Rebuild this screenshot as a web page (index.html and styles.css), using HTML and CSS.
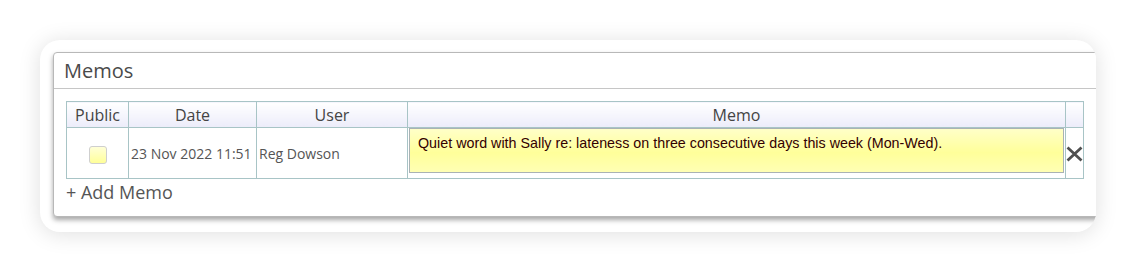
FILE: index.html
```html
<!DOCTYPE html>
<html>
<head>
<meta charset="utf-8">
<link rel="stylesheet" href="styles.css">
</head>
<body>
<div class="card">
  <div class="panel">
    <div class="panel-head">Memos</div>
    <div class="panel-body">
      <table class="memos">
        <colgroup>
          <col class="c-public"><col class="c-date"><col class="c-user"><col class="c-memo"><col class="c-del">
        </colgroup>
        <thead>
          <tr><th>Public</th><th>Date</th><th>User</th><th>Memo</th><th></th></tr>
        </thead>
        <tbody>
          <tr>
            <td class="center"><span class="check"></span></td>
            <td>23 Nov 2022 11:51</td>
            <td>Reg Dowson</td>
            <td class="memo-cell"><div class="memo-box">Quiet word with Sally re: lateness on three consecutive days this week (Mon-Wed).</div></td>
            <td class="del"><svg width="17" height="16" viewBox="0 0 17 16"><path d="M1.5 1.5 L15.5 14.5 M15.5 1.5 L1.5 14.5" stroke="#505050" stroke-width="2.8" fill="none"/></svg></td>
          </tr>
        </tbody>
      </table>
      <div class="add">+ Add Memo</div>
    </div>
  </div>
</div>
</body>
</html>
```
FILE: styles.css
```css
html, body { margin: 0; padding: 0; background: #fff; }
body { width: 1137px; height: 273px; overflow: hidden; font-family: "Open Sans", sans-serif; }
.card {
  margin: 40px 0 0 40px;
  width: 1056px;
  height: 192px;
  box-sizing: border-box;
  padding: 12px 0 0 13px;
  border-radius: 20px;
  background: #fff;
  box-shadow: 0 2px 22px rgba(0,0,0,0.13);
  overflow: hidden;
}
.panel {
  width: 1100px;
  height: 165px;
  box-sizing: border-box;
  border: 1px solid #b8b8b8;
  border-radius: 4px;
  background: #fff;
  box-shadow: 0 3px 5px rgba(0,0,0,0.35);
}
.panel-head {
  height: 36px;
  box-sizing: border-box;
  border-bottom: 1px solid #c6c6c6;
  padding: 4px 0 0 10px;
  font-size: 20px;
  color: #4a4a4a;
  line-height: 28px;
}
.panel-body { padding: 12px 0 0 12px; }
.memos {
  border-collapse: collapse;
  table-layout: fixed;
  width: 1017px;
}
.c-public { width: 62px; }
.c-date { width: 128px; }
.c-user { width: 151px; }
.c-memo { width: 658px; }
.c-del { width: 18px; }
.memos th, .memos td { border: 1px solid #a8c4c6; padding: 0; }
.memos th {
  height: 25px;
  font-weight: normal;
  font-size: 16px;
  color: #444;
  line-height: 22px;
  background: linear-gradient(#ffffff, #ececfa);
}
.memos td {
  height: 51px;
  box-sizing: border-box;
  font-size: 14px;
  color: #555;
  padding-left: 2px;
  white-space: nowrap;
  vertical-align: middle;
}
.memos td.center { text-align: center; padding-left: 0; }
.check {
  display: inline-block;
  width: 16px;
  height: 16px;
  margin-top: 2px;
  border: 1px solid #cfcfcf;
  border-radius: 3px;
  background: linear-gradient(#ffffd8, #ffff99);
  vertical-align: middle;
}
.memos td.memo-cell { padding: 0 1px 0 1px; vertical-align: top; }
.memo-box {
  height: 45px;
  box-sizing: border-box;
  border: 1px solid #aab2b4;
  background: linear-gradient(#ffffc8, #ffff9a 55%, #ffffb4);
  padding: 6px 0 0 8px;
  font-family: "Liberation Sans", Arial, sans-serif;
  font-size: 14.3px;
  color: #300;
  line-height: 17px;
}
.memos td.del { padding: 0; text-align: center; }
.del svg { display: block; margin: 2px 0 0 0; }
.add {
  font-size: 18px;
  color: #555;
  line-height: 24px;
  margin-top: 1px;
}
```
